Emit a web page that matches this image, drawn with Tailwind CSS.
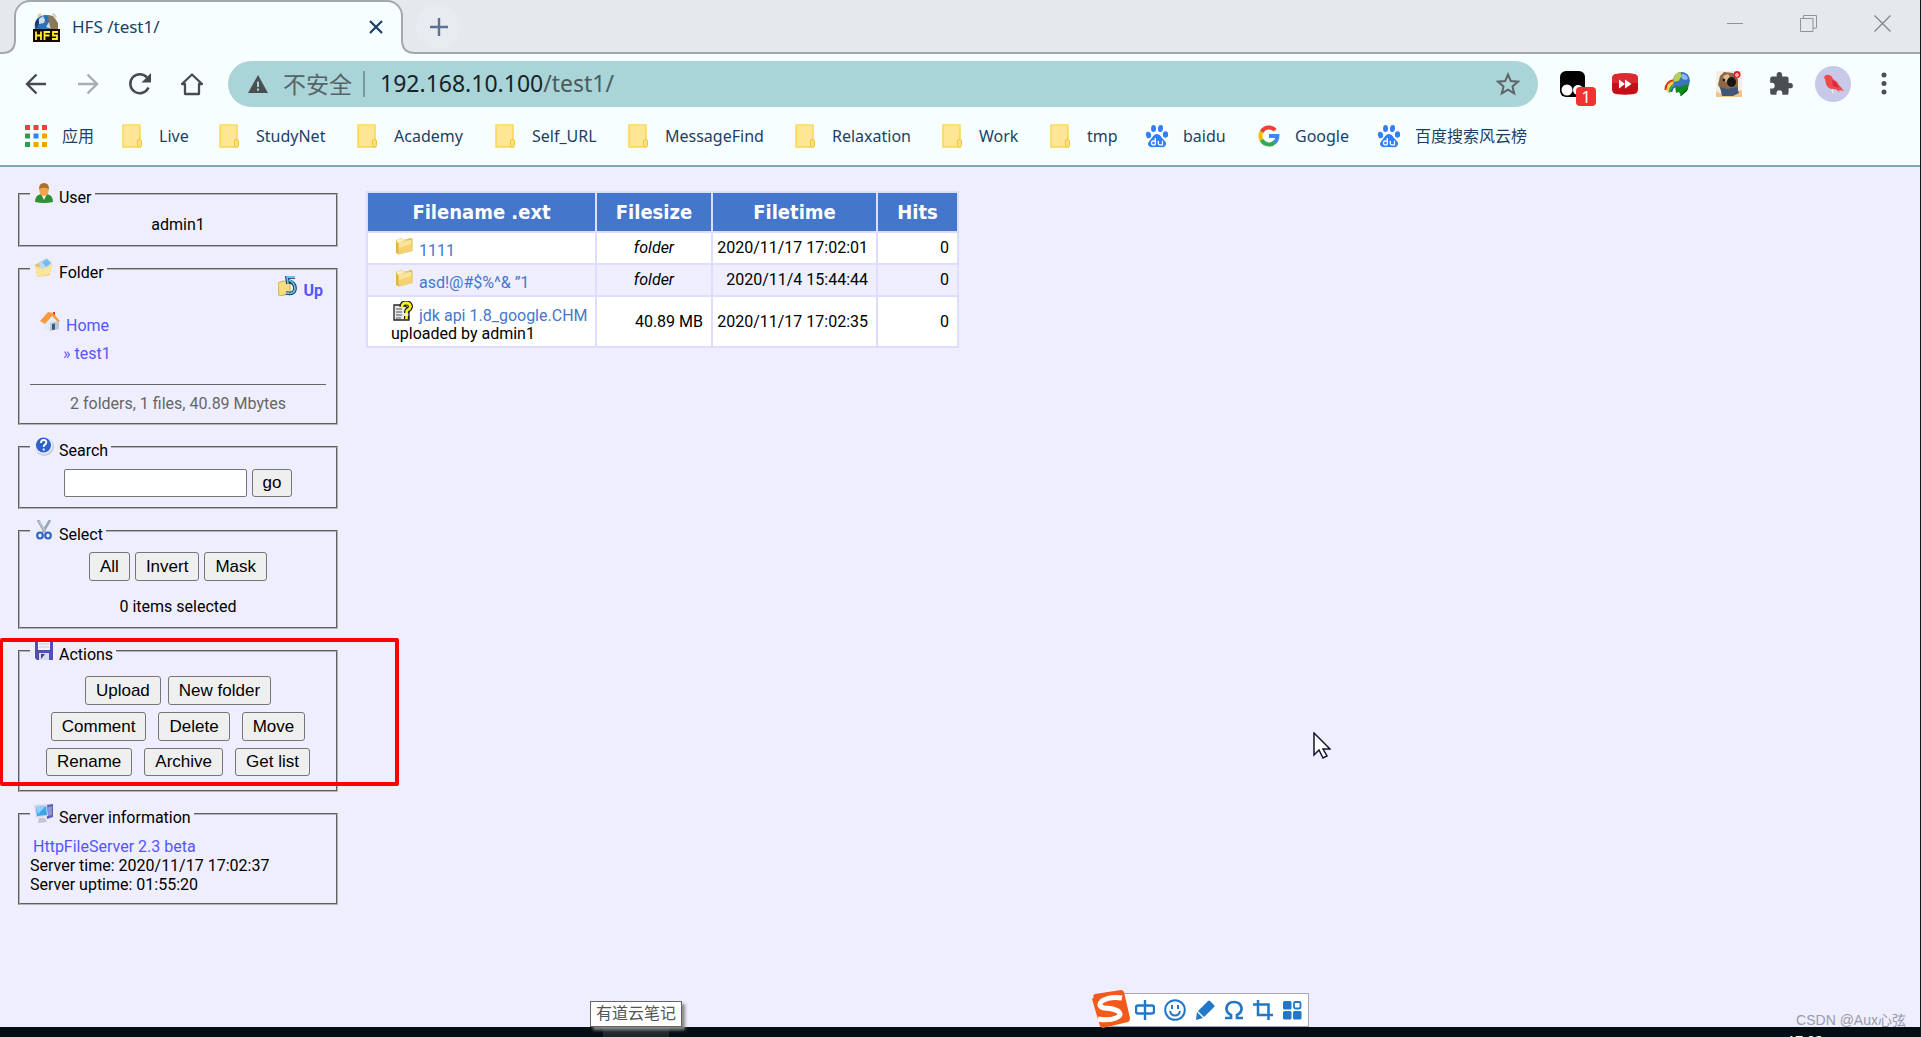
<!DOCTYPE html>
<html lang="en">
<head>
    <meta charset="UTF-8">
    <meta name="viewport" content="width=device-width, initial-scale=1.0">
    <title>HFS /test1/</title>
    <script src="https://cdn.jsdelivr.net/npm/@tailwindcss/browser@4"></script>
</head>
<body class="min-h-screen flex flex-col border-r border-[#10151a] bg-[#efeefe] overflow-hidden font-['Noto_Sans','Noto_Sans_CJK_SC',sans-serif]">

    <!-- icons used more than once -->
    <svg class="hidden">
        <symbol id="bookmark-folder" viewBox="0 0 20 24">
            <rect x="1" y="1" width="17" height="22" fill="#ffe694" stroke="#fbd64c" stroke-width="1.5"/>
            <path d="M1 1h17" stroke="#fbe08a" stroke-width="1.5"/>
            <rect x="15.500" y="15.500" width="4" height="7.500" rx="1.500" fill="#ffe07a" stroke="#f0c53c"/>
        </symbol>
        <symbol id="baidu" viewBox="0 0 24 24">
            <g fill="#2f80fb">
                <ellipse cx="3.500" cy="11" rx="2.600" ry="3.300" transform="rotate(-12 3.500 11)"/>
                <ellipse cx="8.500" cy="4.500" rx="2.500" ry="3.500"/>
                <ellipse cx="15.500" cy="4.500" rx="2.500" ry="3.500" transform="rotate(8 15.500 4.500)"/>
                <ellipse cx="20.500" cy="10.500" rx="2.600" ry="3.300"/>
                <path d="M12 10c3 0 4 3 6 5s3.500 3.500 3 5.500-2.500 3-5 2.800c-3-.4-5-.4-8 0-2.500.2-4.700-.8-5-3-.2-2 1.300-3.300 3-5.300S9 10 12 10z"/>
            </g>
            <path d="M10.300 14v6.800M10.300 17H8.500q-2 0-2 1.900t2 1.900h1.800M13.300 16.800v2.500q0 1.500 1.500 1.500h2.700v-4" fill="none" stroke="#fff" stroke-width="1.300"/>
        </symbol>
        <symbol id="folder" viewBox="0 0 20 20">
            <path d="M2 4l5-2 2 2 8-2 1.500 1v12L5 18.500 2 17z" fill="#e3b540"/>
            <path d="M4.500 7L17.500 3.500v11.500L5 18z" fill="#fbe49b"/>
            <path d="M4.500 12L17.500 8v7L5 18z" fill="#f5d270"/>
            <path d="M2.500 4l4.500-1.500 2 2 7-1.500-11 4-2-1z" fill="#fff3c4"/>
        </symbol>
    </svg>

    <header class="bg-[#f7feff] text-[#1c3f66]">
        <div class="flex items-end h-[54px] bg-[#e6e9eb] border-b-2 border-[#a3a8ab] pl-[14px]">
            <div class="relative flex items-center w-[389px] h-[54px] -mb-[2px] px-[17px] pb-[3px] rounded-t-2xl border-2 border-b-0 border-[#a3a8ab] bg-[#f7feff]">
                <svg class="absolute -left-[14px] bottom-0 w-[14px] h-[14px]" viewBox="0 0 14 14"><path d="M14 0v14H0v-1Q13 13 13 0z" fill="#f7feff"/><path d="M0 13Q13 13 13 0" fill="none" stroke="#a3a8ab" stroke-width="2"/></svg>
                <svg class="absolute -right-[14px] bottom-0 w-[14px] h-[14px]" viewBox="0 0 14 14"><path d="M0 0v14h14v-1Q1 13 1 0z" fill="#f7feff"/><path d="M14 13Q1 13 1 0" fill="none" stroke="#a3a8ab" stroke-width="2"/></svg>
                <svg class="w-[27px] h-[30px]" viewBox="0 0 27 30">
                    <path d="M2 18C0 8 6 3 13 3s13 5 11 15z" fill="#2f6fb5"/>
                    <path d="M6 7l4-3 2 4-1 3-5 1zM13 15l3-5 3 1v6z" fill="#cfdde4"/>
                    <path d="M15 3l5 1 5 7v7h-7l-2-8z" fill="#8a7a5a"/>
                    <path d="M2 11l3-5 1 5-3 6z" fill="#1b3a66"/>
                    <path d="M4 4l3-3 2 2-4 3zM19 2l2-1 3 4-2 1z" fill="#d9cfa6"/>
                    <rect y="17" width="27" height="13" fill="#150800"/>
                    <path d="M3 19.500v8.500M8 19.500v8.500M3 23.500h5M11.500 28v-8h5.500M11.500 23.500h5M25 20h-5v3.500h4V27h-5" fill="none" stroke="#ffef2e" stroke-width="1.800"/>
                </svg>
                <span class="flex-1 pl-[12px] text-[17px] leading-6">HFS /test1/</span>
                <button aria-label="Close tab">
                    <svg class="w-4 h-4" viewBox="0 0 16 16"><path d="M2 2l12 12M14 2L2 14" stroke="#1c3f66" stroke-width="2.200"/></svg>
                </button>
            </div>
            <button aria-label="New tab" class="flex items-center justify-center w-[45px] h-[45px] ml-[13px] mb-[3px] rounded-full bg-[#e8ebf0]">
                <svg class="w-5 h-5" viewBox="0 0 20 20"><path d="M10 1v18M1 10h18" stroke="#5b7391" stroke-width="2.400"/></svg>
            </button>
            <div class="flex-1 flex justify-end items-center gap-[57px] h-full pr-[29px] pb-[6px]">
                <button aria-label="Minimize"><svg class="w-4 h-[20px]" viewBox="0 0 16 20"><path d="M0 10.500h16" stroke="#909496"/></svg></button>
                <button aria-label="Restore"><svg class="w-[17px] h-[17px]" viewBox="0 0 17 17"><path d="M.5 3.500h12.500v13H.5zM3.500 3.500V.5h13v12.500h-3.500" fill="none" stroke="#909496"/></svg></button>
                <button aria-label="Close"><svg class="w-[17px] h-[17px]" viewBox="0 0 17 17"><path d="M.5.5l16 16M16.500.5l-16 16" stroke="#808486" stroke-width="1.200"/></svg></button>
            </div>
        </div>

        <div class="flex items-center h-[60px] px-[24px]">
            <nav class="flex gap-[28px]">
                <button aria-label="Back"><svg class="w-6 h-6" viewBox="0 0 24 24"><path d="M22 12H3M12.500 2.500L3 12l9.500 9.500" fill="none" stroke="#474b4e" stroke-width="2.400"/></svg></button>
                <button aria-label="Forward"><svg class="w-6 h-6" viewBox="0 0 24 24"><path d="M2 12h19M11.500 2.500L21 12l-9.500 9.500" fill="none" stroke="#a9adb0" stroke-width="2.400"/></svg></button>
                <button aria-label="Reload"><svg class="w-6 h-6" viewBox="0 0 24 24"><path d="M20.500 15.500A9.500 9.500 0 1 1 19 5.500" fill="none" stroke="#474b4e" stroke-width="2.500"/><path d="M23 1v9.500h-9.500z" fill="#474b4e"/></svg></button>
                <button aria-label="Home"><svg class="w-6 h-6" viewBox="0 0 24 24"><path d="M2 12L12 2.500 22 12h-3v10H5V12z" fill="none" stroke="#474b4e" stroke-width="2.300" stroke-linejoin="round"/></svg></button>
            </nav>
            <div class="flex-1 flex items-center h-[46px] ml-[24px] pl-[20px] pr-[18px] rounded-full bg-[#aad5d8] text-[#4d5a5e]">
                <svg class="w-5 h-[18px]" viewBox="0 0 20 18"><path d="M10 0l10 18H0z" fill="#4b4f52"/><path d="M10 6.500v5.500M10 13.500v2.200" stroke="#aad5d8" stroke-width="2"/></svg>
                <span class="pl-[15px] text-[23px] leading-8 text-[#566266]">不安全</span>
                <span class="w-[2px] h-[26px] ml-[11px] mr-[15px] bg-[#76989c]"></span>
                <span class="flex-1 pb-[2px] text-[23px] leading-8"><span class="text-[#17222a]">192.168.10.100</span>/test1/</span>
                <button aria-label="Bookmark this page"><svg class="w-6 h-6" viewBox="0 0 24 24"><path d="M12 2.500l2.800 6.600 7.200.6-5.500 4.700 1.700 7L12 17.700l-6.200 3.700 1.700-7L2 9.700l7.200-.6z" fill="none" stroke="#5d6467" stroke-width="2"/></svg></button>
            </div>
            <div class="flex items-center gap-[26px] pl-[22px]">
                <button class="relative w-[26px] h-[26px]" aria-label="Userscripts">
                    <svg class="w-[26px] h-[26px]" viewBox="0 0 26 26"><rect width="25" height="26" rx="6" fill="#000"/><circle cx="7" cy="19" r="5.500" fill="#fff"/><circle cx="18" cy="19" r="5" fill="#fff"/></svg>
                    <span class="absolute left-[16px] top-[16px] w-5 h-[19px] rounded-sm bg-[#f03232] text-white text-[17px] leading-[19px] text-center">1</span>
                </button>
                <button aria-label="Video speed"><svg class="w-[26px] h-[22px]" viewBox="0 0 26 22"><path d="M4 1Q13-.5 22 1q4 .5 4 5v10q0 4.500-4 5-9 1.500-18 0-4-.5-4-5V6q0-4.500 4-5z" fill="#c40f17"/><path d="M4 1Q13-.5 22 1q4 .5 4 5v4H0V6q0-4.500 4-5z" fill="#dd2a30"/><path d="M7 6.500l6 4.500-6 4.500zM13 6.500l6.500 4.500-6.500 4.500z" fill="#fff"/></svg></button>
                <button aria-label="Download manager">
                    <svg class="w-[26px] h-[26px]" viewBox="0 0 26 26">
                        <path d="M11 9Q1.500 10 1.500 19" fill="none" stroke="#d92e20" stroke-width="2"/>
                        <path d="M12 11Q3.500 11 3.500 20.500" fill="none" stroke="#f6d226" stroke-width="2.200"/>
                        <path d="M13 13Q6 13 5.500 21.500" fill="none" stroke="#3ea43a" stroke-width="2.200"/>
                        <path d="M13 15Q8 15 7.500 21" fill="none" stroke="#2a5cc0" stroke-width="1.800"/>
                        <circle cx="17.500" cy="9.500" r="8.500" fill="#3e74bb"/>
                        <path d="M9.500 8q1-6 7-7l1 4-3 5-5 1z" fill="#b9cf52"/><path d="M18 3q5 0 6 5l-4 1-3-3z" fill="#8dbbe8"/>
                        <path d="M11 15q5 2 10-1l4-1-1 5-7 7-2-4-3 1z" fill="#0f8a1c"/>
                        <path d="M16 25l8-8-1 3-6 5z" fill="#084f0e"/>
                    </svg>
                </button>
                <button aria-label="Dog">
                    <svg class="w-[26px] h-[26px]" viewBox="0 0 26 26">
                        <rect width="26" height="26" fill="#f5eee3"/>
                        <path d="M0 20q6 6 26-1v7H0z" fill="#f0c48a"/>
                        <path d="M4 5l4-4 9 1 5 6v12l-6 3H8L2 14z" fill="#8d6747"/>
                        <path d="M7 5l5-2 3 5-6 3z" fill="#dfb98e"/>
                        <ellipse cx="15.500" cy="11" rx="4.500" ry="5" fill="#161514"/>
                        <circle cx="8" cy="9" r="1.300" fill="#20150f"/>
                        <path d="M4 16l7 2 10-2 2 6-6 3H6z" fill="#405777"/>
                        <circle cx="21" cy="3.500" r="3.500" fill="#e5182c"/><circle cx="21" cy="4" r="1.300" fill="none" stroke="#fff"/>
                    </svg>
                </button>
                <button aria-label="Extensions"><svg class="w-[26px] h-[26px]" viewBox="0 0 24 24"><path d="M20.500 11H19V7a2 2 0 0 0-2-2h-4V3.500a2.500 2.500 0 0 0-5 0V5H4a2 2 0 0 0-2 2v3.800h1.500a2.700 2.700 0 0 1 0 5.400H2V20a2 2 0 0 0 2 2h3.800v-1.500a2.700 2.700 0 0 1 5.400 0V22H17a2 2 0 0 0 2-2v-4h1.500a2.500 2.500 0 0 0 0-5z" fill="#4b4f52"/></svg></button>
                <button aria-label="Profile" class="-mx-[5px]">
                    <svg class="w-9 h-9" viewBox="0 0 36 36"><circle cx="18" cy="18" r="18" fill="#c8c9e9"/><path d="M9 12q1-4 5-3 3 .5 4 4 4 2 6 6l5 6-5-1 1 2-5-3q-7 1-9-5-.5-3-1-5z" fill="#f04a48"/><path d="M17 14q5 2 7 8l-6-2z" fill="#d62a45"/><path d="M17 23l1 4" stroke="#eee" stroke-width="1.300"/></svg>
                </button>
                <button aria-label="Menu"><svg class="w-[24px] h-[26px]" viewBox="0 0 24 26"><g fill="#4b4f52"><circle cx="12" cy="4" r="2.500"/><circle cx="12" cy="12.500" r="2.500"/><circle cx="12" cy="21" r="2.500"/></g></svg></button>
            </div>
        </div>

        <div class="flex items-center h-[53px] pb-[8px] pl-[24px] border-b-2 border-[#84a9ac] text-base whitespace-nowrap">
            <a href="#" class="flex items-center gap-[14px] w-[98px]">
                <svg class="w-6 h-[22px]" viewBox="0 0 24 22">
                    <path d="M1 0h5v5H1zM9.500 0h5v5h-5zM18 0h5v5h-5z" fill="#f53b3b"/>
                    <path d="M1 8.500h5v5H1zM1 17h5v5H1z" fill="#2c9e4e"/>
                    <path d="M9.500 8.500h5v5h-5z" fill="#2089f5"/>
                    <path d="M18 8.500h5v5h-5zM9.500 17h5v5h-5zM18 17h5v5h-5z" fill="#f5a200"/>
                </svg>应用</a>
            <a href="#" class="flex items-center gap-[17px] w-[97px]"><svg class="w-5 h-6"><use href="#bookmark-folder"/></svg>Live</a>
            <a href="#" class="flex items-center gap-[17px] w-[138px]"><svg class="w-5 h-6"><use href="#bookmark-folder"/></svg>StudyNet</a>
            <a href="#" class="flex items-center gap-[17px] w-[138px]"><svg class="w-5 h-6"><use href="#bookmark-folder"/></svg>Academy</a>
            <a href="#" class="flex items-center gap-[17px] w-[133px]"><svg class="w-5 h-6"><use href="#bookmark-folder"/></svg>Self_URL</a>
            <a href="#" class="flex items-center gap-[17px] w-[167px]"><svg class="w-5 h-6"><use href="#bookmark-folder"/></svg>MessageFind</a>
            <a href="#" class="flex items-center gap-[17px] w-[147px]"><svg class="w-5 h-6"><use href="#bookmark-folder"/></svg>Relaxation</a>
            <a href="#" class="flex items-center gap-[17px] w-[108px]"><svg class="w-5 h-6"><use href="#bookmark-folder"/></svg>Work</a>
            <a href="#" class="flex items-center gap-[17px] w-[95px]"><svg class="w-5 h-6"><use href="#bookmark-folder"/></svg>tmp</a>
            <a href="#" class="flex items-center gap-[14px] w-[112px]"><svg class="w-6 h-6 bg-white"><use href="#baidu"/></svg>baidu</a>
            <a href="#" class="flex items-center gap-[14px] w-[120px]">
                <svg class="w-6 h-6" viewBox="0 0 24 24"><g fill="none" stroke-width="4"><path d="M4.600 8A8.400 8.400 0 0 1 18.200 6.200" stroke="#ea4335"/><path d="M4.600 16.200A8.400 8.400 0 0 1 4.600 7.800" stroke="#fbbc05"/><path d="M18 18A8.400 8.400 0 0 1 4.600 16" stroke="#34a853"/><path d="M12 12h8.400q0 4-2.700 6.200" stroke="#4285f4"/></g></svg>Google</a>
            <a href="#" class="flex items-center gap-[14px]"><svg class="w-6 h-6 bg-white"><use href="#baidu"/></svg>百度搜索风云榜</a>
        </div>
    </header>

    <main class="relative flex-1 flex items-start gap-[28px] pt-[16px] pl-[18px] text-base leading-5 text-black font-['Roboto','Noto_Sans_CJK_SC',sans-serif]">
        <aside class="w-[320px] space-y-[11px]">
            <fieldset class="border-2 [border-style:groove] border-[#b4b4b4] px-[10px] pt-[10px] pb-[10px]">
                <legend class="h-[22px] leading-4 pl-[4px] pr-[3px]">
                    <svg class="inline align-baseline w-5 h-5 mr-px" viewBox="0 0 20 20"><path d="M1 19q0-7 6-8h6q6 1 6 8-9 2-18 0z" fill="#2f8f35"/><path d="M7 11h6l-3 6z" fill="#e8f5e2"/><ellipse cx="10" cy="7" rx="4.800" ry="6" fill="#f0a54b"/><path d="M5 6q0-6 5-6t5 6q-5-3-10 0z" fill="#a8702c"/></svg>
                    User</legend>
                <p class="text-center">admin1</p>
            </fieldset>

            <fieldset class="border-2 [border-style:groove] border-[#b4b4b4] px-[10px] pb-[6px]">
                <legend class="h-[22px] leading-4 pl-[4px] pr-[3px]">
                    <svg class="inline align-baseline w-5 h-5 mr-px" viewBox="0 0 20 20"><path d="M1 7l5-3 10 1v12L3 19z" fill="#e8bf55"/><path d="M5 4l8-4 5 5-3 8-9-1z" fill="#b9dcf5"/><path d="M8 4l5-3 4 4-5 4z" fill="#7fb8e8"/><path d="M3 19L1 8l8 3 10-5-3 10z" fill="#fbe59c"/></svg>
                    Folder</legend>
                <div class="flex items-baseline justify-end gap-[5px] h-[22px] -mt-[4px] pr-[3px]">
                    <svg class="w-5 h-5" viewBox="0 0 20 20"><path d="M0 7l5-2 7 1v12L1 20z" fill="#f6dc83" stroke="#d6ae47"/><path d="M8 17q9 2 9-5 0-5-6-7M17 1H9l1 7" fill="none" stroke="#0d2f4d" stroke-width="3.600"/><path d="M8 17q9 2 9-5 0-5-6-8M17 1H9l1 7" fill="none" stroke="#5fc4ee" stroke-width="1.800"/></svg>
                    <a href="#" class="font-bold text-[#5555ff]">Up</a>
                </div>
                <div class="flex items-baseline gap-[6px] h-6 mt-[13px] pl-[10px]">
                    <svg class="w-5 h-5" viewBox="0 0 20 20"><path d="M4 9l8-5 7 6v8l-9 2-7-2z" fill="#e3ecf6"/><path d="M10 12l9-2v8l-9 2z" fill="#b5c8de"/><path d="M12 13l3-.5v6l-3 .5z" fill="#48566e"/><path d="M13 1h2v4h-2z" fill="#d03a20"/><path d="M0 10L8 1l5 1 7 8-2 1-6-6-7 8z" fill="#f39c3f"/></svg>
                    <a href="#" class="text-[#5555ff]">Home</a>
                </div>
                <div class="h-6 mt-[9px] pl-[33px]"><a href="#" class="text-[#5555ff]">» test1</a></div>
                <hr class="mt-[16px] border-[#666]">
                <p class="mt-[9px] mb-[3px] text-center text-[#666]">2 folders, 1 files, 40.89 Mbytes</p>
            </fieldset>

            <fieldset class="border-2 [border-style:groove] border-[#b4b4b4] px-[10px] pt-[11px] pb-[10px]">
                <legend class="h-[22px] leading-4 pl-[4px] pr-[3px]">
                    <svg class="inline align-baseline w-5 h-5 mr-px" viewBox="0 0 20 20"><circle cx="10.500" cy="10.500" r="9.500" fill="#c9cfdb"/><circle cx="9.500" cy="9" r="9" fill="#eef1f8"/><circle cx="9.500" cy="9" r="7.600" fill="#2d62cc"/><path d="M7 7q0-3 2.700-3T12.300 6.500Q12 8 10.500 9q-.8.500-.8 2M9.700 12.500v2" fill="none" stroke="#fff" stroke-width="1.900"/></svg>
                    <label for="search">Search</label></legend>
                <form class="flex justify-center gap-[5px]">
                    <input id="search" type="text" class="w-[183px] h-[28px] px-1 border border-[#767676] rounded-xs bg-white">
                    <button type="button" class="h-[28px] px-[10px] border border-[#767676] rounded-[3px] bg-[#efefef] text-[17px] font-['Liberation_Sans',sans-serif]">go</button>
                </form>
            </fieldset>

            <fieldset class="border-2 [border-style:groove] border-[#b4b4b4] px-[10px] pt-[10px] pb-[10px]">
                <legend class="h-[22px] leading-4 pl-[4px] pr-[3px]">
                    <svg class="inline align-baseline w-5 h-5 mr-px" viewBox="0 0 20 20"><path d="M4 0l7 12M16 0L9 12" stroke="#9aa5b3" stroke-width="2.600"/><path d="M5 1l6 10" stroke="#d5dbe2"/><g fill="none" stroke="#2f66bf" stroke-width="2.200"><ellipse cx="6" cy="15.500" rx="2.800" ry="3"/><ellipse cx="14" cy="15.500" rx="2.800" ry="3"/></g></svg>
                    Select</legend>
                <div class="flex justify-center gap-[5px] text-[17px] font-['Liberation_Sans',sans-serif]">
                    <button class="h-[29px] px-[10px] border border-[#767676] rounded-[3px] bg-[#efefef]">All</button>
                    <button class="h-[29px] px-[10px] border border-[#767676] rounded-[3px] bg-[#efefef]">Invert</button>
                    <button class="h-[29px] px-[10px] border border-[#767676] rounded-[3px] bg-[#efefef]">Mask</button>
                </div>
                <p class="mt-[16px] text-center">0 items selected</p>
            </fieldset>

            <div class="relative">
                <fieldset class="border-2 [border-style:groove] border-[#b4b4b4] px-[10px] pt-[14px] pb-[14px]">
                    <legend class="h-[22px] leading-4 pl-[4px] pr-[3px]">
                        <svg class="inline align-baseline w-5 h-5 mr-px" viewBox="0 0 20 20"><path d="M1 0h18v20H3l-2-2z" fill="#4f4fb4"/><path d="M4 0h12v10H4z" fill="#f4f4fa"/><path d="M5 4h10M5 7h10" stroke="#c5c8d8"/><path d="M5 13h10v7H5z" fill="#d9dcf0"/><path d="M11 14l-4 5V14z" fill="#3d3f8e"/></svg>
                        Actions</legend>
                    <div class="space-y-[7px] text-[17px] font-['Liberation_Sans',sans-serif]">
                        <div class="flex justify-center gap-[7px]">
                            <button class="h-[29px] px-[10px] border border-[#767676] rounded-[3px] bg-[#efefef]">Upload</button>
                            <button class="h-[29px] px-[10px] border border-[#767676] rounded-[3px] bg-[#efefef]">New folder</button>
                        </div>
                        <div class="flex justify-center gap-[12px]">
                            <button class="h-[29px] px-[10px] border border-[#767676] rounded-[3px] bg-[#efefef]">Comment</button>
                            <button class="h-[29px] px-[10px] border border-[#767676] rounded-[3px] bg-[#efefef]">Delete</button>
                            <button class="h-[29px] px-[10px] border border-[#767676] rounded-[3px] bg-[#efefef]">Move</button>
                        </div>
                        <div class="flex justify-center gap-[12px]">
                            <button class="h-[28px] px-[10px] border border-[#767676] rounded-[3px] bg-[#efefef]">Rename</button>
                            <button class="h-[28px] px-[10px] border border-[#767676] rounded-[3px] bg-[#efefef]">Archive</button>
                            <button class="h-[28px] px-[10px] border border-[#767676] rounded-[3px] bg-[#efefef]">Get list</button>
                        </div>
                    </div>
                </fieldset>
                <!-- highlight box -->
                <div class="absolute -left-[18px] -top-[2px] w-[399px] h-[148px] border-4 border-l-[3px] border-[#ff0000] rounded-xs pointer-events-none"></div>
            </div>

            <fieldset class="border-2 [border-style:groove] border-[#b4b4b4] px-[10px] pt-[12px] pb-[9px] leading-[19px]">
                <legend class="h-[22px] leading-4 pl-[4px] pr-[3px]">
                    <svg class="inline align-baseline w-5 h-5 mr-px" viewBox="0 0 20 20"><path d="M12 2l7-1v13l-6 2z" fill="#5a62b8"/><path d="M14 4l4-1v9l-4 1z" fill="#8b93d6"/><path d="M0 2l13-1 1 12-12 2z" fill="#d5dae6"/><path d="M2 4l10-1 1 9-10 1z" fill="#3fa4ee"/><path d="M2 4l10-1-8 8z" fill="#8fd3fb"/><path d="M5 15h6l2 4-9 1z" fill="#c0c5d3"/></svg>
                    Server information</legend>
                <a href="#" class="block pl-[3px] text-[#5555ff]">HttpFileServer 2.3 beta</a>
                <p>Server time: 2020/11/17 17:02:37</p>
                <p>Server uptime: 01:55:20</p>
            </fieldset>
        </aside>

        <table class="mt-[8px] border-collapse text-right [&_td]:border-2 [&_td]:border-[#ddddff] [&_th]:border-2 [&_th]:border-[#ddddff]">
            <thead>
                <tr class="h-[40px] bg-[#4477cc] text-white text-xl text-center font-['DejaVu_Sans_Condensed','DejaVu_Sans',sans-serif]">
                    <th class="w-[229px]">Filename .ext</th>
                    <th class="w-[116px]">Filesize</th>
                    <th class="w-[165px]">Filetime</th>
                    <th class="w-[81px]">Hits</th>
                </tr>
            </thead>
            <tbody>
                <tr class="h-[32px] bg-white">
                    <td class="pl-[26px] text-left"><a href="#" class="flex items-baseline gap-[5px] text-[#4477cc]"><svg class="w-5 h-5"><use href="#folder"/></svg>1111</a></td>
                    <td class="text-center italic">folder</td>
                    <td class="pr-[8px]">2020/11/17 17:02:01</td>
                    <td class="pr-[8px]">0</td>
                </tr>
                <tr class="h-[32px] bg-[#efeefe]">
                    <td class="pl-[26px] text-left"><a href="#" class="flex items-baseline gap-[5px] text-[#4477cc]"><svg class="w-5 h-5"><use href="#folder"/></svg>asd!@#$%^&amp; ”1</a></td>
                    <td class="text-center italic">folder</td>
                    <td class="pr-[8px]">2020/11/4 15:44:44</td>
                    <td class="pr-[8px]">0</td>
                </tr>
                <tr class="h-[51px] bg-white">
                    <td class="pl-[23px] text-left leading-[18px]">
                        <a href="#" class="flex items-baseline gap-[6px] text-[#4477cc]"><svg class="w-5 h-5 ml-[2px]" viewBox="0 0 20 20"><path d="M1 4h10l5 4v11H1z" fill="#e8e8e8" stroke="#222" stroke-width="1.300"/><path d="M3 8h6M3 11h6M3 14h6M3 17h5" stroke="#555"/><path d="M9 6q0-4 4-4t4.500 3.500Q17 8 14.500 9q-1 .5-1 3M13.500 15v3" fill="none" stroke="#111" stroke-width="5"/><path d="M9 6q0-4 4-4t4.500 3.500Q17 8 14.500 9q-1 .5-1 3M13.500 15v3" fill="none" stroke="#f7ef1f" stroke-width="2.800"/></svg>jdk api 1.8_google.CHM</a>
                        uploaded by admin1
                    </td>
                    <td class="pr-[8px]">40.89 MB</td>
                    <td class="pr-[8px]">2020/11/17 17:02:35</td>
                    <td class="pr-[8px]">0</td>
                </tr>
            </tbody>
        </table>

        <!-- floating items above the page -->
        <svg class="absolute left-[1313px] top-[565px] w-[18px] h-[29px]" viewBox="0 0 18 29"><path d="M1 1v22l5-5 4 8 4-2-4-7h7z" fill="#fff" stroke="#15152a" stroke-width="1.500"/></svg>

        <div class="absolute left-[590px] bottom-0 h-[26px] px-[5px] border border-[#666] bg-white text-base leading-6 text-[#555] shadow-[3px_3px_3px_#888]">有道云笔记</div>

        <div class="absolute left-[1110px] bottom-0 flex items-center gap-[9px] w-[199px] h-[34px] pl-[24px] border border-[#a6a8c0] bg-white text-[#2277c8]">
            <svg class="absolute -left-[20px] -top-[5px] w-10 h-10" viewBox="0 0 40 40"><path d="M3 8Q1 7 4 5L30 1q2 0 3 2l6 26q0 3-2 4l-25 6q-2 0-3-2L1 10z" fill="#f15a1c"/><path d="M31 9Q19 7 11 12q-5 5 2 7 8 0 14 3 5 4-2 7-7 3-18 1" fill="none" stroke="#fff" stroke-width="5"/></svg>
            <svg class="w-5 h-5" viewBox="0 0 20 20"><path d="M10 0v20M3 5.500h14q2 0 2 2v4q0 2-2 2H3q-2 0-2-2v-4q0-2 2-2z" fill="none" stroke="currentColor" stroke-width="2.400"/></svg>
            <svg class="w-[22px] h-[22px]" viewBox="0 0 22 22"><g fill="none" stroke="currentColor" stroke-width="2"><circle cx="11" cy="11" r="9.800"/><path d="M6 12q1 4.500 5 4.500t5-4.500M8 6v4M14 6v4"/></g></svg>
            <svg class="w-5 h-5" viewBox="0 0 20 20"><path d="M13 1q1-1 2 0l4 4q1 1 0 2L9 17 3 11zM2 12l6 6-7 2z" fill="currentColor"/></svg>
            <svg class="w-5 h-5" viewBox="0 0 20 20"><path d="M1 18h6v-3Q2 12.500 2.500 8 3.500 2 10 2t7.500 6q.5 4.500-4.500 7v3h6" fill="none" stroke="currentColor" stroke-width="2.700"/></svg>
            <svg class="w-5 h-5" viewBox="0 0 20 20"><path d="M5 0v15h15M0 4.500h15.500V20" fill="none" stroke="currentColor" stroke-width="2.500"/></svg>
            <svg class="w-5 h-5" viewBox="0 0 20 20"><g fill="currentColor"><rect x="1" y="1" width="8.500" height="8.500" rx="1.500"/><rect x="1" y="11" width="8.500" height="8.500" rx="1.500"/><rect x="11" y="11" width="8.500" height="8.500" rx="1.500"/></g><rect x="12" y="2" width="6.500" height="6.500" rx="1.500" fill="none" stroke="currentColor" stroke-width="1.800"/></svg>
        </div>

        <div class="absolute right-[14px] -bottom-[3px] text-sm leading-5 text-[#9a9aa8] font-['Liberation_Sans','Noto_Sans_CJK_SC',sans-serif]">CSDN @Aux心弦</div>
    </main>

    <footer class="flex h-[10px] pl-[603px] bg-[#040d14] overflow-hidden">
        <div class="w-[66px] bg-[#20282c]"></div>
        <div class="flex-1 pt-[4px] pr-[97px] text-right text-sm leading-5 text-white">17:02</div>
    </footer>
</body>
</html>
